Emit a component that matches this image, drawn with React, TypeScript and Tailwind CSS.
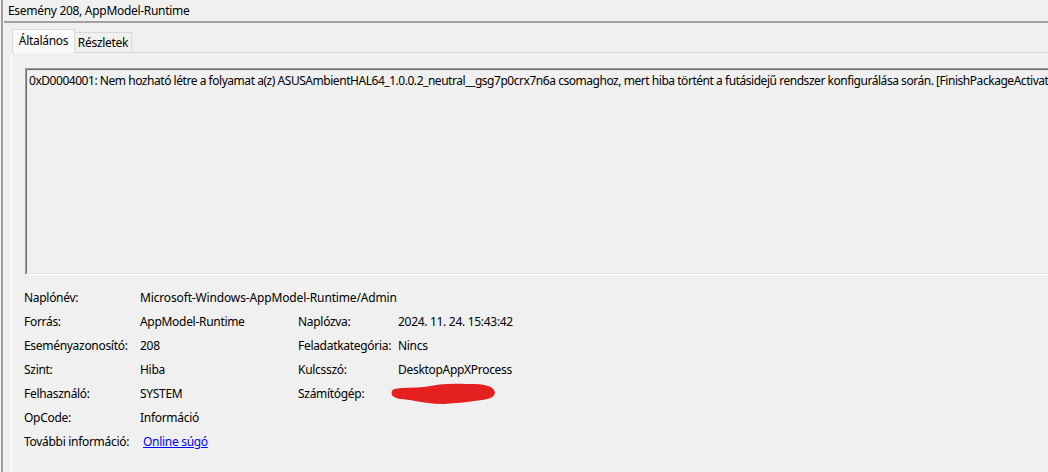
import React from 'react'

const rows: {label: string; value: React.ReactNode; label2?: string; value2?: React.ReactNode}[] = [
    {label: 'Forrás:', value: 'AppModel-Runtime', label2: 'Naplózva:', value2: '2024. 11. 24. 15:43:42'},
    {label: 'Eseményazonosító:', value: '208', label2: 'Feladatkategória:', value2: 'Nincs'},
    {label: 'Szint:', value: 'Hiba', label2: 'Kulcsszó:', value2: 'DesktopAppXProcess'},
    {label: 'Felhasználó:', value: 'SYSTEM', label2: 'Számítógép:', value2: 'redacted'},
    {label: 'OpCode:', value: 'Információ'},
]

const Scribble: React.FC = () => (
    <svg width="106" height="22" viewBox="0 0 106 22" className="block -ml-[8px]">
        <path
            d="M4 6 C14 4 24 5 34 4 C48 1 62 0 76 1 C88 1 100 1 104 7 C107 12 102 16 92 17 C80 19 66 20 54 21 C42 21 30 19 20 17 C12 16 4 16 2 12 C1 9 2 7 4 6 Z"
            fill="#e42020"
        />
    </svg>
)

const App: React.FC = () => {
    return (
        <div className="w-[1048px] h-[472px] bg-[#f0f0f0] pl-[1px] overflow-hidden text-[12px] tracking-[-0.3px] text-black font-['Noto_Sans',sans-serif]">
            <div className="h-full border-l-2 border-[#a0a0a0] flex flex-col">
                <div className="h-[21px] pl-[5px] leading-[21px] whitespace-nowrap">Esemény 208, AppModel-Runtime</div>
                <div className="ml-[1px] h-[2px] bg-[#a0a0a0]"/>

                <div className="mt-[5px] pl-[9px] flex items-end h-[24px]">
                    <div className="h-[24px] w-[63px] border border-b-0 border-[#d9d9d9] bg-[#fafafa] flex items-center justify-center relative z-10 -mb-px pb-px">
                        Általános
                    </div>
                    <div className="h-[20px] w-[57px] border border-l-0 border-b-0 border-[#d9d9d9] bg-[#f0f0f0] flex items-center justify-center">
                        Részletek
                    </div>
                </div>

                <div className="ml-[8px] flex-1 border-t border-l border-t-[#d9d9d9] border-l-white">
                    <div className="ml-[13px] mt-[15px] h-[207px] border-t border-l border-[#a0a0a0] border-b border-b-white">
                        <div className="h-full border-t border-l border-[#696969] border-b border-b-[#e3e3e3] pl-[2px] pt-[3px] leading-[16px] whitespace-nowrap overflow-hidden tracking-[-0.46px]">
                            0xD0004001: Nem hozható létre a folyamat a(z) ASUSAmbientHAL64_1.0.0.2_neutral__gsg7p0crx7n6a csomaghoz, mert hiba történt a futásidejű rendszer konfigurálása során. [FinishPackageActivation]
                        </div>
                    </div>

                    <div className="mt-[11px] pl-[12px]">
                        <div className="flex h-[24px] items-center">
                            <div className="w-[116px]">Naplónév:</div>
                            <div className="tracking-[-0.15px]">Microsoft-Windows-AppModel-Runtime/Admin</div>
                        </div>
                        {rows.map((row, index) => (
                            <div key={index} className="flex h-[24px] items-center">
                                <div className="w-[116px]">{row.label}</div>
                                <div className="w-[158px]">{row.value}</div>
                                <div className="w-[100px]">{row.label2}</div>
                                <div>{row.value2 === 'redacted' ? <Scribble/> : row.value2}</div>
                            </div>
                        ))}
                        <div className="flex h-[24px] items-center">
                            <div className="w-[119px]">További információ:</div>
                            <a href="#" className="text-[#0000ff] underline">Online súgó</a>
                        </div>
                    </div>
                </div>
            </div>
        </div>
    )
}

export default App
